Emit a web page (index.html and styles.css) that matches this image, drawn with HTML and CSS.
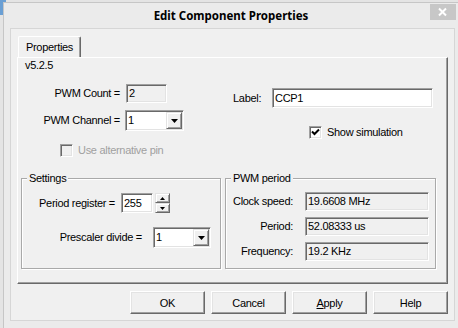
FILE: index.html
```html
<!DOCTYPE html>
<html>
<head>
  <title>Edit Component Properties</title>
  <meta charset="UTF-8" />
  <meta name="viewport" content="width=device-width, initial-scale=1.0"/>
  <link rel="stylesheet" href="styles.css">
</head>
<body>
  <div class="window">
    <div class="titlebar">
      <span class="title">Edit Component Properties</span>
      <span class="close">
        <svg width="26" height="16" viewBox="0 0 26 16"><path d="M9 4.5L16 11.5M16 4.5L9 11.5" stroke="#fff" stroke-width="2"/></svg>
      </span>
    </div>

    <div class="client">
      <div class="tabs"><div class="tab">Properties</div></div>

      <div class="panel">
        <div class="version">v5.2.5</div>

        <div class="top">
          <div class="left">
            <div class="pwm-grid">
              <span class="lbl">PWM Count =</span>
              <span class="edit readonly count">2</span>
              <span class="lbl">PWM Channel =</span>
              <span class="edit combo channel">1<span class="drop"><svg width="7" height="4"><path d="M0 0H7L3.5 4Z" fill="#000"/></svg></span></span>
            </div>
            <div class="check-row alt">
              <span class="check disabled"></span>
              <span>Use alternative pin</span>
            </div>
          </div>

          <div class="right">
            <div class="label-row">
              <span class="label-name">Label:</span>
              <span class="edit label-edit">CCP1</span>
            </div>
            <div class="check-row sim">
              <span class="check">
                <svg width="9" height="9" viewBox="0 0 9 9"><path d="M1 3.5L3.5 6L8 1.5" stroke="#000" stroke-width="2" fill="none"/></svg>
              </span>
              <span>Show simulation</span>
            </div>
          </div>
        </div>

        <div class="groups">
          <fieldset class="group settings">
            <legend>Settings</legend>
            <div class="row period-row">
              <span class="lbl period-lbl">Period register =</span>
              <span class="edit period-edit">255</span>
              <span class="spin">
                <span class="spin-btn"><svg width="5" height="3"><path d="M2.5 0L5 3H0Z" fill="#000"/></svg></span>
                <span class="spin-btn"><svg width="5" height="3"><path d="M0 0H5L2.5 3Z" fill="#000"/></svg></span>
              </span>
            </div>
            <div class="row prescale-row">
              <span class="lbl prescale-lbl">Prescaler divide =</span>
              <span class="edit combo prescale">1<span class="drop"><svg width="7" height="4"><path d="M0 0H7L3.5 4Z" fill="#000"/></svg></span></span>
            </div>
          </fieldset>

          <fieldset class="group period">
            <legend>PWM period</legend>
            <div class="row info-row first">
              <span class="lbl info-lbl">Clock speed:</span>
              <span class="edit readonly info">19.6608 MHz</span>
            </div>
            <div class="row info-row">
              <span class="lbl info-lbl">Period:</span>
              <span class="edit readonly info">52.08333 us</span>
            </div>
            <div class="row info-row">
              <span class="lbl info-lbl">Frequency:</span>
              <span class="edit readonly info">19.2 KHz</span>
            </div>
          </fieldset>
        </div>
      </div>

      <div class="buttons">
        <button>OK</button>
        <button>Cancel</button>
        <button><u>A</u>pply</button>
        <button>Help</button>
      </div>
    </div>
  </div>
</body>
</html>
```

FILE: styles.css
```css
body { margin: 0; font: 11px "Liberation Sans", Arial, sans-serif; letter-spacing: -0.3px; color: #000; background: #e4e4e4 linear-gradient(#6a9fd4, #6a9fd4) 0 0 / 6px 15px no-repeat; }

.window { margin: 2px 0 0 3px; height: 326px; box-sizing: border-box; border-top: 1px solid #c6c6c6; border-left: 1px solid #c6c6c6; background: #ebebeb; display: flex; flex-direction: column; }

.titlebar { height: 25px; flex: none; display: grid; grid-template-columns: 1fr auto 1fr; align-items: start; }
.title { grid-column: 2; font: bold 11.5px "Noto Sans", sans-serif; letter-spacing: 0; line-height: 25px; color: #000; }
.close { grid-column: 3; justify-self: end; width: 26px; height: 16px; margin: 1px 2px 0 0; background: #c7c7c7; display: flex; }

.client { flex: 1; margin: 0 3px 7px 6px; border: 1px solid #d6d6d6; background: #f0f0f0; padding: 7px 6px 6px; display: flex; flex-direction: column; }

.tabs { display: flex; height: 21px; padding-left: 1px; }
.tab { width: 63px; box-sizing: border-box; border: 1px solid; border-color: #fff #696969 transparent #fff; border-bottom: 0; box-shadow: inset -1px 0 #a0a0a0; border-radius: 2px 2px 0 0; text-align: center; line-height: 20px; }

.panel { height: 227px; box-sizing: border-box; border: 1px solid; border-color: #fff #696969 #696969 #fff; box-shadow: inset -1px -1px #a0a0a0; }

.version { padding: 1px 0 0 7px; line-height: 13px; }

.top { display: flex; }
.left { width: 207px; }
.right { padding: 16px 0 0 8px; }

.lbl { line-height: 13px; white-space: nowrap; }

.pwm-grid { display: grid; grid-template-columns: 102px auto; column-gap: 5px; row-gap: 7px; margin-top: 12px; align-items: center; justify-items: start; }
.pwm-grid .lbl { justify-self: end; }

.edit { box-sizing: border-box; display: flex; align-items: center; padding: 0 2px; background: #fff; border: 1px solid; border-color: #a0a0a0 #fff #fff #a0a0a0; box-shadow: inset 1px 1px #696969, inset -1px -1px #e3e3e3; line-height: 13px; }
.readonly { background: #f0f0f0; }
.count { width: 41px; height: 19px; margin-left: 1px; }
.channel { width: 59px; height: 21px; }

.combo { justify-content: space-between; padding-right: 1px; }
.drop { width: 16px; height: 17px; box-sizing: border-box; background: #f0f0f0; border: 1px solid; border-color: #e3e3e3 #696969 #696969 #e3e3e3; box-shadow: inset 1px 1px #fff, inset -1px -1px #a0a0a0; display: flex; align-items: center; justify-content: center; }

.check-row { display: flex; align-items: center; gap: 5px; line-height: 13px; }
.check { width: 13px; height: 13px; box-sizing: border-box; background: #fff; border: 1px solid; border-color: #a0a0a0 #fff #fff #a0a0a0; box-shadow: inset 1px 1px #696969, inset -1px -1px #e3e3e3; display: flex; align-items: center; justify-content: center; }
.check.disabled { background: #f0f0f0; }
.alt { margin: 13px 0 0 42px; color: #a0a0a0; }
.sim { margin: 18px 0 0 76px; }

.label-row { display: flex; align-items: center; }
.label-name { width: 39px; }
.label-edit { width: 161px; height: 20px; }

.groups { display: flex; gap: 4px; margin: 15px 0 0 3px; }
.group { margin: 0; padding: 0; height: 97px; box-sizing: border-box; border: 1px solid #a9a9a9; box-shadow: inset 1px 1px #fff, 1px 1px #fff; }
.group legend { margin-left: 5px; padding: 0 2px; line-height: 13px; background: #f0f0f0; }
.settings { width: 200px; }
.period { width: 211px; }

.row { display: flex; align-items: center; }
.row .lbl { text-align: right; }
.period-row { margin-top: 8px; }
.period-lbl { width: 93px; margin-right: 6px; }
.period-edit { width: 32px; height: 20px; }
.spin { margin-left: 2px; display: flex; flex-direction: column; }
.spin-btn { width: 15px; height: 10px; box-sizing: border-box; background: #f0f0f0; border: 1px solid; border-color: #e3e3e3 #696969 #696969 #e3e3e3; box-shadow: inset 1px 1px #fff, inset -1px -1px #a0a0a0; display: flex; align-items: center; justify-content: center; }
.prescale-row { margin-top: 14px; }
.prescale-lbl { width: 120px; margin-right: 11px; }
.prescale { width: 58px; height: 21px; }

.info-row { margin-top: 6px; }
.info-row.first { margin-top: 7px; }
.info-lbl { width: 67px; margin-right: 12px; }
.info { width: 124px; height: 19px; }

.buttons { display: flex; justify-content: flex-end; gap: 6px; margin-top: 7px; }
button { width: 75px; height: 23px; padding: 0; font: 11px "Liberation Sans", Arial, sans-serif; letter-spacing: -0.3px; color: #000; background: #f0f0f0; border: 1px solid; border-color: #fff #696969 #696969 #fff; box-shadow: inset -1px -1px #a0a0a0, inset 1px 1px #e3e3e3; }
```
